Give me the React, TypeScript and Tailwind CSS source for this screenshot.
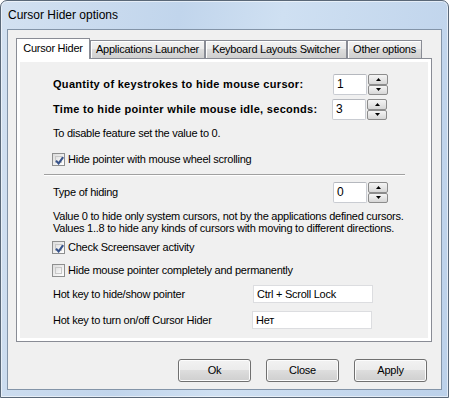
const ui = "font-['Liberation_Sans','Arial',sans-serif]";
const body = "text-[11px] tracking-[-0.25px] whitespace-nowrap";

function Checkbox({ checked }: { checked: boolean }) {
  return (
    <span className="w-[13px] h-[13px] border border-[#8e8f8f] bg-[linear-gradient(135deg,#dcdcdc,#ffffff)] p-[2px] shrink-0 flex">
      <span className="flex-1 bg-[linear-gradient(135deg,#e2e2e2,#f9f9f9)] border border-[#c8c8c8] relative">
        {checked && (
          <svg viewBox="0 0 7 7" className="absolute -left-[1px] -top-[1px] w-[9px] h-[9px]">
            <path d="M0.8 3.6 L2.8 5.8 L6.4 0.9" fill="none" stroke="#36528a" strokeWidth="1.6" />
          </svg>
        )}
      </span>
    </span>
  );
}

function CheckRow({ checked, label, className }: { checked: boolean; label: string; className: string }) {
  return (
    <div className={`flex items-center gap-[3px] pl-[32px] h-[13px] ${className}`}>
      <Checkbox checked={checked} />
      <span className={`${body} leading-[13px]`}>{label}</span>
    </div>
  );
}

function Arrow({ up }: { up: boolean }) {
  return (
    <span className="flex-1 border border-[#8c8c8c] rounded-[2px] bg-[linear-gradient(to_bottom,#f4f4f4,#e6e6e6_50%,#d6d6d6)] flex items-center justify-center">
      <svg viewBox="0 0 5 3" className="w-[5px] h-[3px]">
        {up ? <path d="M2.5 0 L5 3 L0 3 Z" fill="#000" /> : <path d="M0 0 L5 0 L2.5 3 Z" fill="#000" />}
      </svg>
    </span>
  );
}

function Spin({ value }: { value: string }) {
  return (
    <div className="flex h-[21px] gap-[1px]">
      <div className="w-[34px] h-[21px] bg-white border border-[#c9ccd2] border-t-[#b5b8be] rounded-[2px] text-[12px] leading-[19px] pl-[3px]">
        {value}
      </div>
      <div className="w-[20px] flex flex-col">
        <Arrow up />
        <Arrow up={false} />
      </div>
    </div>
  );
}

function Tab({ label, width }: { label: string; width: string }) {
  return (
    <div className={`${width} h-[18px] border border-b-0 border-[#898c95] bg-[linear-gradient(to_bottom,#f2f2f2,#ebebeb_50%,#dddddd_50%,#cfcfcf)] ${body} leading-[17px] text-center shadow-[inset_1px_1px_0_#fff]`}>
      {label}
    </div>
  );
}

function Button({ label }: { label: string }) {
  return (
    <div className={`w-[73px] h-[23px] border border-[#707070] rounded-[3px] bg-[linear-gradient(to_bottom,#f2f2f2,#ebebeb_50%,#dddddd_50%,#cfcfcf)] shadow-[inset_0_0_0_1px_#fcfcfc] ${body} leading-[21px] text-center`}>
      {label}
    </div>
  );
}

export default function App() {
  return (
    <div className={`w-[449px] h-[398px] bg-white text-black ${ui}`}>
      <div className="w-full h-full rounded-t-[7px] border border-[#5a6878] bg-[linear-gradient(100deg,#d3e1f1,#c1d5ec_35%,#cfe0f2_55%,#bcd1ea)] shadow-[inset_0_0_0_1px_rgba(255,255,255,0.55)] flex flex-col px-[6px] pb-[7px]">
        {/* Title bar */}
        <div className="h-[28px] flex items-center pl-[1px] text-[12px] whitespace-nowrap">
          Cursor Hider options
        </div>

        {/* Client area */}
        <div className="flex-1 border border-[#8394a8] bg-[#f0f0f0] flex flex-col">
          <div className="ml-[8px] mt-[8px] w-[416px]">
            {/* Tabs */}
            <div className="flex items-end h-[20px]">
              <div className={`w-[74px] h-[21px] border border-b-0 border-[#898c95] bg-white ${body} leading-[19px] text-center relative z-10 -mb-px`}>
                Cursor Hider
              </div>
              <Tab label="Applications Launcher" width="w-[115px]" />
              <Tab label="Keyboard Layouts Switcher" width="w-[142px]" />
              <Tab label="Other options" width="w-[75px]" />
            </div>

            {/* Panel */}
            <div className="h-[284px] border border-[#898c95] bg-white p-[3px] flex">
              <div className={`flex-1 bg-[#f0f0f0] flex flex-col ${body}`}>
                <div className="flex items-center mt-[12px] pl-[33px]">
                  <span className="w-[280px] font-bold tracking-[0.3px]">Quantity of keystrokes to hide mouse cursor:</span>
                  <Spin value="1" />
                </div>
                <div className="flex items-center mt-[4px] pl-[33px]">
                  <span className="w-[279px] font-bold tracking-[0.3px]">Time to hide pointer while mouse idle, seconds:</span>
                  <Spin value="3" />
                </div>
                <div className="mt-[7px] pl-[33px] leading-[13px]">To disable feature set the value to 0.</div>
                <CheckRow checked label="Hide pointer with mouse wheel scrolling" className="mt-[13px]" />

                <div className="mt-[8px] ml-[24px] w-[361px] border-t border-[#a0a0a0] border-b border-b-white" />

                <div className="flex items-center mt-[6px] pl-[33px]">
                  <span className="w-[280px]">Type of hiding</span>
                  <Spin value="0" />
                </div>
                <div className="mt-[7px] pl-[33px] leading-[12px]">
                  <div>Value 0 to hide only system cursors, not by the applications defined cursors.</div>
                  <div>Values 1..8 to hide any kinds of cursors with moving to different directions.</div>
                </div>
                <CheckRow checked label="Check Screensaver activity" className="mt-[7px]" />
                <CheckRow checked={false} label="Hide mouse pointer completely and permanently" className="mt-[10px]" />

                <div className="flex items-center mt-[8px] pl-[33px]">
                  <span className="w-[200px]">Hot key to hide/show pointer</span>
                  <div className="w-[120px] h-[18px] bg-white border border-[#dcdde0] leading-[16px] pl-[3px]">Ctrl + Scroll Lock</div>
                </div>
                <div className="flex items-center mt-[8px] pl-[33px]">
                  <span className="w-[199px]">Hot key to turn on/off Cursor Hider</span>
                  <div className="w-[120px] h-[18px] bg-white border border-[#dcdde0] leading-[16px] pl-[3px]">Нет</div>
                </div>
              </div>
            </div>
          </div>

          {/* Buttons */}
          <div className="flex justify-end gap-[15px] mt-[17px] pr-[14px]">
            <Button label="Ok" />
            <Button label="Close" />
            <Button label="Apply" />
          </div>
        </div>
      </div>
    </div>
  );
}
